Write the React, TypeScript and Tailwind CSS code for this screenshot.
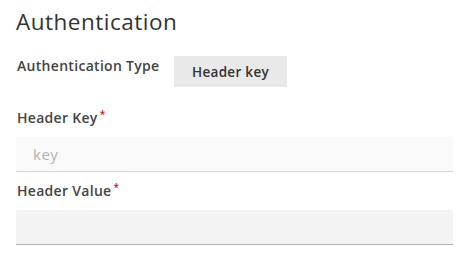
import React from "react";

export default function App() {
  return (
    <div className="w-[474px] h-[255px] bg-white overflow-hidden pl-[16px] pr-[21px] text-[#3a3a3a]" style={{ fontFamily: '"Open Sans", "Noto Sans", sans-serif' }}>
      <h1 className="pt-[7px] text-[22.5px] leading-[30px] font-normal text-[#333] tracking-[0.5px]">Authentication</h1>
      <div className="mt-[19px] flex items-start">
        <div className="pl-[1px] text-[14px] leading-[20px] font-semibold text-[#444] tracking-[0.3px] w-[158px]">Authentication Type</div>
        <button className="w-[113px] h-[31px] bg-[#e9e9e9] text-[13.5px] font-semibold text-[#333] tracking-[0.3px] flex items-center justify-center pt-[1px]">Header key</button>
      </div>
      <div className="mt-[21px] pl-[1px] text-[14px] leading-[20px] font-semibold text-[#444] tracking-[0.3px] flex">
        Header Key<span className="text-[#d0121b] text-[10px] leading-[12px] ml-[2px]">*</span>
      </div>
      <div className="mt-[9px] h-[35px] bg-[#fafafa] border-b border-[#d4d4d4] flex items-center pl-[17px] text-[15px] text-[#b3b3b3] tracking-[0.5px]">key</div>
      <div className="mt-[9px] pl-[1px] text-[14px] leading-[20px] font-semibold text-[#444] tracking-[0.3px] flex">
        Header Value<span className="text-[#d0121b] text-[10px] leading-[12px] ml-[2px]">*</span>
      </div>
      <div className="mt-[9px] h-[35px] bg-[#f3f3f3] border-b border-[#b5b5b5]"></div>
    </div>
  );
}
